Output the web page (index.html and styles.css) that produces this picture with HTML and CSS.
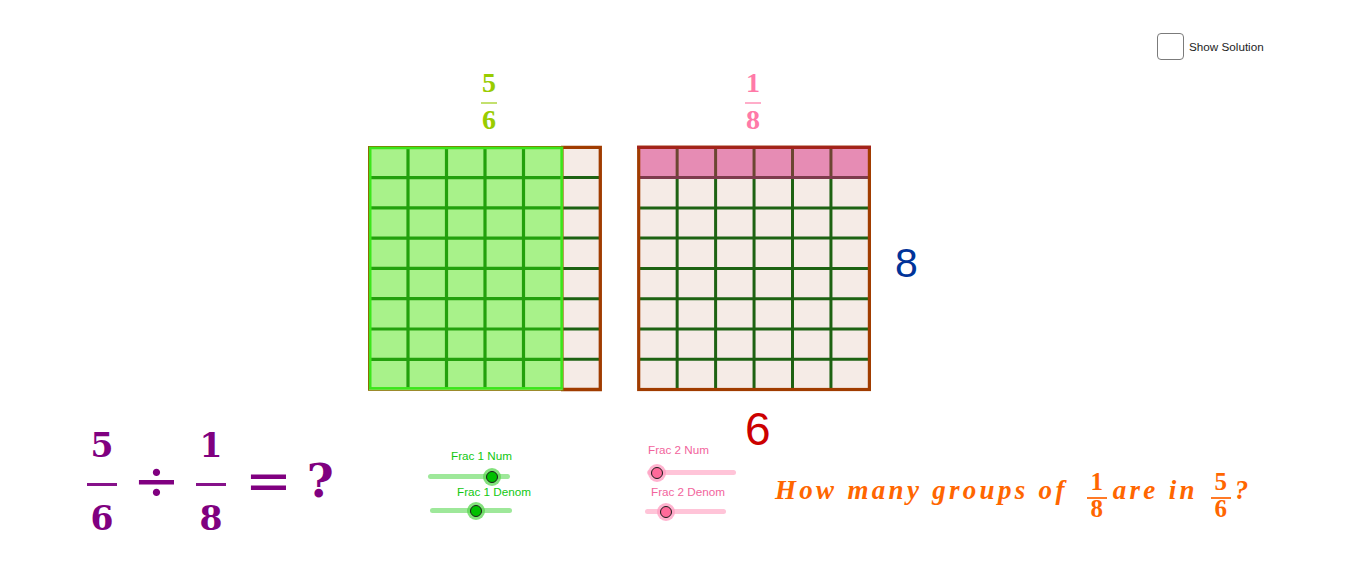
FILE: index.html
```html
<!DOCTYPE html>
<html lang="en">
<head>
<meta charset="utf-8">
<title>Dividing fractions</title>
<link rel="stylesheet" href="styles.css">
</head>
<body>
<div class="app">
  <header class="topbar">
    <label class="check"><span class="check-box"></span><span class="check-label">Show Solution</span></label>
  </header>

  <main class="board">
    <figure class="model model-a">
      <div class="frac-head frac-green"><span class="num">5</span><span class="bar"></span><span class="den">6</span></div>
      <svg class="grid" width="236" height="247" viewBox="0 0 236 247">
        <rect x="194" y="2.3" width="39.3" height="242.2" fill="#f5ebe6"/>
        <g stroke="#1d6212" stroke-width="3">
          <line x1="195" y1="32.6" x2="232" y2="32.6"/>
          <line x1="195" y1="62.9" x2="232" y2="62.9"/>
          <line x1="195" y1="93.1" x2="232" y2="93.1"/>
          <line x1="195" y1="123.4" x2="232" y2="123.4"/>
          <line x1="195" y1="153.7" x2="232" y2="153.7"/>
          <line x1="195" y1="184" x2="232" y2="184"/>
          <line x1="195" y1="214.3" x2="232" y2="214.3"/>
        </g>
        <path d="M194 2.3 H233.3 V244.5 H194" fill="none" stroke="#a03c00" stroke-width="3.3"/>
        <rect x="1.5" y="1.5" width="194.6" height="243.8" fill="#a8f28a" stroke="#8a6f00" stroke-width="1"/>
        <g stroke="#23a00d" stroke-width="3.2">
          <line x1="41" y1="3" x2="41" y2="243.3"/>
          <line x1="79.5" y1="3" x2="79.5" y2="243.3"/>
          <line x1="118" y1="3" x2="118" y2="243.3"/>
          <line x1="156.5" y1="3" x2="156.5" y2="243.3"/>
          <line x1="3.3" y1="32.6" x2="194.6" y2="32.6"/>
          <line x1="3.3" y1="62.9" x2="194.6" y2="62.9"/>
          <line x1="3.3" y1="93.1" x2="194.6" y2="93.1"/>
          <line x1="3.3" y1="123.4" x2="194.6" y2="123.4"/>
          <line x1="3.3" y1="153.7" x2="194.6" y2="153.7"/>
          <line x1="3.3" y1="184" x2="194.6" y2="184"/>
          <line x1="3.3" y1="214.3" x2="194.6" y2="214.3"/>
        </g>
        <rect x="3.25" y="3" width="191.35" height="240.3" fill="none" stroke="#3be61b" stroke-width="2.5"/>
      </svg>
    </figure>

    <figure class="model model-b">
      <div class="frac-head frac-pink"><span class="num">1</span><span class="bar"></span><span class="den">8</span></div>
      <div class="grid-row">
        <svg class="grid" width="235" height="247" viewBox="0 0 235 247">
          <rect x="1.7" y="2.3" width="230.7" height="242.2" fill="#f5ebe6"/>
          <rect x="1.7" y="2.3" width="230.7" height="30.3" fill="#e68cb4"/>
          <g stroke="#1d6212" stroke-width="3">
            <line x1="40.15" y1="32.6" x2="40.15" y2="244.5"/>
            <line x1="78.6" y1="32.6" x2="78.6" y2="244.5"/>
            <line x1="117.05" y1="32.6" x2="117.05" y2="244.5"/>
            <line x1="155.5" y1="32.6" x2="155.5" y2="244.5"/>
            <line x1="193.95" y1="32.6" x2="193.95" y2="244.5"/>
            <line x1="1.7" y1="62.9" x2="232.4" y2="62.9"/>
            <line x1="1.7" y1="93.1" x2="232.4" y2="93.1"/>
            <line x1="1.7" y1="123.4" x2="232.4" y2="123.4"/>
            <line x1="1.7" y1="153.7" x2="232.4" y2="153.7"/>
            <line x1="1.7" y1="184" x2="232.4" y2="184"/>
            <line x1="1.7" y1="214.3" x2="232.4" y2="214.3"/>
          </g>
          <g stroke="#6b4632" stroke-width="3">
            <line x1="40.15" y1="2.3" x2="40.15" y2="32.6"/>
            <line x1="78.6" y1="2.3" x2="78.6" y2="32.6"/>
            <line x1="117.05" y1="2.3" x2="117.05" y2="32.6"/>
            <line x1="155.5" y1="2.3" x2="155.5" y2="32.6"/>
            <line x1="193.95" y1="2.3" x2="193.95" y2="32.6"/>
          </g>
          <line x1="1.7" y1="32.6" x2="232.4" y2="32.6" stroke="#7d3b4c" stroke-width="3"/>
          <rect x="1.7" y="2.3" width="230.7" height="242.2" fill="none" stroke="#a03c00" stroke-width="3.2"/>
          <line x1="0.1" y1="2.3" x2="234" y2="2.3" stroke="#a3231a" stroke-width="3.2"/>
        </svg>
        <span class="dim dim-rows">8</span>
      </div>
      <span class="dim dim-cols">6</span>
    </figure>
  </main>

  <section class="controls">
    <div class="equation">
      <span class="eq-frac"><span class="num">5</span><span class="bar"></span><span class="den">6</span></span>
      <span class="op op-div">÷</span>
      <span class="eq-frac eq-frac-b"><span class="num">1</span><span class="bar"></span><span class="den">8</span></span>
      <span class="op op-eq">=</span>
      <span class="op-q">?</span>
    </div>

    <div class="sliders sliders-a">
      <span class="slider-label label-a1">Frac 1 Num</span>
      <div class="track track-a1"><span class="knob" style="left: 77.7%"></span></div>
      <span class="slider-label label-a2">Frac 1 Denom</span>
      <div class="track track-a2"><span class="knob" style="left: 55.7%"></span></div>
    </div>

    <div class="sliders sliders-b">
      <span class="slider-label label-b1">Frac 2 Num</span>
      <div class="track track-b1"><span class="knob" style="left: 10.9%"></span></div>
      <span class="slider-label label-b2">Frac 2 Denom</span>
      <div class="track track-b2"><span class="knob" style="left: 25.4%"></span></div>
    </div>

    <p class="question">
      <span class="q-text q-lead">How many groups of</span>
      <span class="q-frac q-frac-a"><span class="num">1</span><span class="bar"></span><span class="den">8</span></span>
      <span class="q-text q-mid">are in</span>
      <span class="q-frac q-frac-b"><span class="num">5</span><span class="bar"></span><span class="den">6</span></span>
      <span class="q-text q-end">?</span>
    </p>
  </section>
</div>
</body>
</html>
```

FILE: styles.css
```css
* { box-sizing: border-box; }

body {
  margin: 0;
  background: #ffffff;
  font-family: "Liberation Sans", Arial, sans-serif;
}

.app {
  width: 1358px;
  height: 578px;
  overflow: hidden;
  background: #ffffff;
}

/* ---------- top bar ---------- */
.topbar {
  display: flex;
  align-items: center;
  height: 60px;
  padding: 33px 0 0 1157px;
}

.check {
  display: flex;
  align-items: center;
  gap: 5px;
}

.check-box {
  width: 27px;
  height: 27px;
  border: 1px solid #7b7b7b;
  border-radius: 4px;
  background: #ffffff;
}

.check-label {
  font-size: 11.7px;
  color: #1e1e1e;
}

/* ---------- board ---------- */
.board {
  display: flex;
  align-items: flex-start;
  gap: 34px;
  padding-left: 367px;
}

.model {
  margin: 0;
  display: flex;
  flex-direction: column;
  align-items: flex-start;
}

.frac-head {
  display: flex;
  flex-direction: column;
  align-items: center;
  width: 16px;
  margin-top: 9px;
  font-family: "Liberation Serif", "Times New Roman", serif;
  font-weight: bold;
  font-size: 28px;
  line-height: 28px;
}

.frac-head .bar {
  width: 16px;
  height: 2px;
  margin: 5px 0 2px;
}

.model-a .frac-head { margin-left: 114px; }
.model-b .frac-head { margin-left: 108px; }

.frac-green { color: #99cc00; }
.frac-green .bar { background: #c3e06e; }
.frac-pink { color: #ff7aa8; }
.frac-pink .bar { background: #ffadc9; }

.grid {
  display: block;
  margin-top: 11px;
}

.grid-row {
  display: flex;
  align-items: flex-start;
}

.grid-row .grid { margin-top: 11px; }

.dim {
  font-family: "Liberation Sans", Arial, sans-serif;
}

.dim-rows {
  margin: 109px 0 0 23px;
  font-size: 41px;
  line-height: 41px;
  color: #003399;
}

.dim-cols {
  margin: 14px 0 0 108px;
  font-size: 46px;
  line-height: 46px;
  color: #cc0000;
}

/* ---------- controls ---------- */
.controls {
  display: flex;
  align-items: flex-start;
  margin-top: -27px;
  padding-left: 87px;
}

.equation {
  display: flex;
  align-items: flex-start;
  width: 341px;
  padding-top: 4px;
  font-family: "DejaVu Serif", serif;
  font-weight: bold;
  color: #800080;
}

.eq-frac {
  display: flex;
  flex-direction: column;
  align-items: center;
  width: 30px;
  font-size: 33px;
  line-height: 33px;
}

.eq-frac .bar {
  width: 30px;
  height: 2.5px;
  margin: 21px 0 16px;
  background: #86128a;
}

.op {
  font-size: 56px;
  line-height: 56px;
  font-weight: normal;
  margin-top: 24px;
}

.op-div { margin-left: 16px; }
.eq-frac-b { margin-left: 16px; }
.op-eq { margin-left: 19px; }

.op-q {
  font-size: 46px;
  line-height: 46px;
  margin: 29px 0 0 15px;
}

/* sliders */
.sliders {
  display: flex;
  flex-direction: column;
  align-items: flex-start;
}

.sliders-a { width: 217px; padding-top: 24px; }
.sliders-b { width: 130px; padding-top: 18px; }

.slider-label {
  font-size: 11.7px;
  line-height: 13px;
  white-space: nowrap;
}

.sliders-a .slider-label { color: #11c811; }
.sliders-b .slider-label { color: #f2649c; }

.track {
  position: relative;
  height: 5px;
  border-radius: 3px;
}

.sliders-a .track { background: #9ee89a; }
.sliders-b .track { background: #ffc4d8; }

.knob {
  position: absolute;
  top: 50%;
  width: 12px;
  height: 12px;
  border-radius: 50%;
  transform: translate(-50%, -50%);
  border: 1px solid #1b1b1b;
}

.sliders-a .knob {
  background: #00c000;
  box-shadow: 0 0 0 3px rgba(90, 215, 80, 0.75);
}

.sliders-b .knob {
  background: #ff6a9a;
  box-shadow: 0 0 0 3px rgba(255, 160, 195, 0.8);
}

.label-a1 { margin-left: 23px; }
.track-a1 { width: 82px; margin-top: 12px; }
.label-a2 { margin: 6px 0 0 29px; }
.track-a2 { width: 82px; margin: 10px 0 0 2px; }

.label-b1 { margin-left: 3px; }
.track-b1 { width: 89px; margin: 14px 0 0 2px; }
.label-b2 { margin: 10px 0 0 6px; }
.track-b2 { width: 81px; margin-top: 11px; }

/* question */
.question {
  display: flex;
  align-items: flex-start;
  margin: 0;
  color: #ff6600;
  font-family: "Liberation Serif", "Times New Roman", serif;
  font-weight: bold;
}

.q-text {
  margin-top: 52px;
  font-size: 27px;
  line-height: 27px;
  font-style: italic;
  letter-spacing: 3.3px;
  white-space: nowrap;
}

.q-frac {
  display: flex;
  flex-direction: column;
  align-items: center;
  width: 20px;
  margin-top: 47px;
  font-size: 25px;
  line-height: 20px;
}

.q-frac .bar {
  width: 20px;
  height: 1.6px;
  margin: 5px 0 0;
  background: #ff7a26;
}

.q-frac-a { margin-left: 19px; }
.q-mid { margin-left: 6px; }
.q-frac-b { margin-left: 13px; }
.q-end { margin-left: 4px; }
```
